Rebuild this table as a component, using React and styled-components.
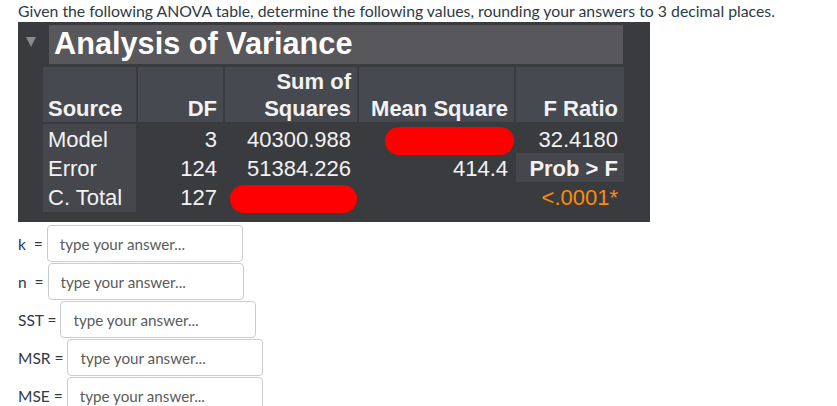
import React from 'react';
import styled, { createGlobalStyle } from 'styled-components';

const Global = createGlobalStyle`
  body { margin: 0; background: #fff; }
`;

const columns = ['Source', 'DF', 'Sum of\nSquares', 'Mean Square', 'F Ratio'];

const App = () => (
  <Page>
    <Global />
    <Question>
      Given the following ANOVA table, determine the following values, rounding your answers to 3 decimal places.
    </Question>

    <Panel>
      <TitleRow>
        <Triangle />
        <TitleBar>Analysis of Variance</TitleBar>
      </TitleRow>

      <Table>
        {columns.map((c, i) => (
          <HeadCell key={c} $align={i === 0 ? 'left' : 'right'}>{c}</HeadCell>
        ))}

        <Cell $shade>Model</Cell>
        <Cell $align="right">3</Cell>
        <Cell $align="right">40300.988</Cell>
        <Cell $align="right"><Redact $left={26} /></Cell>
        <Cell $align="right">32.4180</Cell>

        <Cell $shade>Error</Cell>
        <Cell $align="right">124</Cell>
        <Cell $align="right">51384.226</Cell>
        <Cell $align="right">414.4</Cell>
        <Cell $align="right" $shade $bold>Prob &gt; F</Cell>

        <Cell $shade>C. Total</Cell>
        <Cell $align="right">127</Cell>
        <Cell $align="right"><Redact $left={5} /></Cell>
        <Cell $align="right" />
        <Cell $align="right" $accent>&lt;.0001*</Cell>
      </Table>
    </Panel>

    <Answers>
      <AnswerRow><Label>k&nbsp; =</Label><Input placeholder="type your answer..." /></AnswerRow>
      <AnswerRow><Label>n&nbsp; =</Label><Input placeholder="type your answer..." /></AnswerRow>
      <AnswerRow><Label>SST =</Label><Input placeholder="type your answer..." /></AnswerRow>
      <AnswerRow><Label>MSR =</Label><Input placeholder="type your answer..." /></AnswerRow>
      <AnswerRow><Label>MSE =</Label><Input placeholder="type your answer..." /></AnswerRow>
    </Answers>
  </Page>
);

export default App;

// --- CSS ---
const Page = styled.div`
  padding-left: 18px;
  font-family: Lato, "Noto Sans", sans-serif;
  color: #2d3b45;
`;

const Question = styled.p`
  margin: 0;
  font-size: 15.8px;
  line-height: 22px;
  height: 22px;
  white-space: nowrap;
`;

const Panel = styled.div`
  width: 632px;
  height: 200px;
  box-sizing: border-box;
  background: #393b3f;
  padding-top: 3px;
  font-family: "Liberation Sans", Arial, sans-serif;
  color: #f2f2f2;
`;

const TitleRow = styled.div`display: flex; align-items: flex-start;`;

const Triangle = styled.div`
  margin: 12px 0 0 8px;
  width: 0; height: 0;
  border-left: 5.5px solid transparent;
  border-right: 5.5px solid transparent;
  border-top: 10px solid #8a8a8c;
`;

const TitleBar = styled.div`
  margin-left: 13px;
  width: 574px;
  height: 39px;
  box-sizing: border-box;
  padding-left: 5px;
  background: #58575b;
  font-size: 30.7px;
  font-weight: 700;
  line-height: 38px;
  color: #fff;
`;

const Table = styled.div`
  display: grid;
  margin: 3px 0 0 25px;
  grid-template-columns: 93px 85px 132px 155px 108px;
  grid-template-rows: 57px 29px 29px 30px;
  column-gap: 2px;
`;

const HeadCell = styled.div`
  height: 55px;
  box-sizing: border-box;
  display: flex;
  align-items: flex-end;
  justify-content: ${p => (p.$align === 'left' ? 'flex-start' : 'flex-end')};
  padding: 0 6px 0 5px;
  background: #46494f;
  font-size: 22px;
  font-weight: 700;
  line-height: 27px;
  text-align: ${p => p.$align};
  white-space: pre-line;
`;

const Cell = styled.div`
  position: relative;
  box-sizing: border-box;
  padding: 2px 6px 0 5px;
  background: ${p => (p.$shade ? '#45474d' : 'transparent')};
  font-size: 22px;
  font-weight: ${p => (p.$bold ? 700 : 400)};
  line-height: 27px;
  text-align: ${p => p.$align || 'left'};
  color: ${p => (p.$accent ? '#ff8a0c' : '#f2f2f2')};
  white-space: nowrap;
`;

const Redact = styled.div`
  position: absolute;
  top: 3px;
  left: ${p => p.$left}px;
  right: 0;
  height: 28px;
  border-radius: 14px;
  background: #ff0000;
`;

const Answers = styled.div`padding-top: 3px;`;

const AnswerRow = styled.div`
  height: 38px;
  display: flex;
  align-items: baseline;
  gap: 4px;
`;

const Label = styled.span`
  font-size: 15.5px;
  color: #2d3b45;
  white-space: nowrap;
`;

const Input = styled.input`
  width: 196px;
  height: 37px;
  box-sizing: border-box;
  border: 1px solid #c7cdd1;
  border-radius: 4px;
  padding: 0 12px;
  font-family: Lato, "Noto Sans", sans-serif;
  font-size: 15.2px;
  color: #2d3b45;
  background: #fff;
  &::placeholder { color: #5b5b5b; opacity: 1; }
`;
